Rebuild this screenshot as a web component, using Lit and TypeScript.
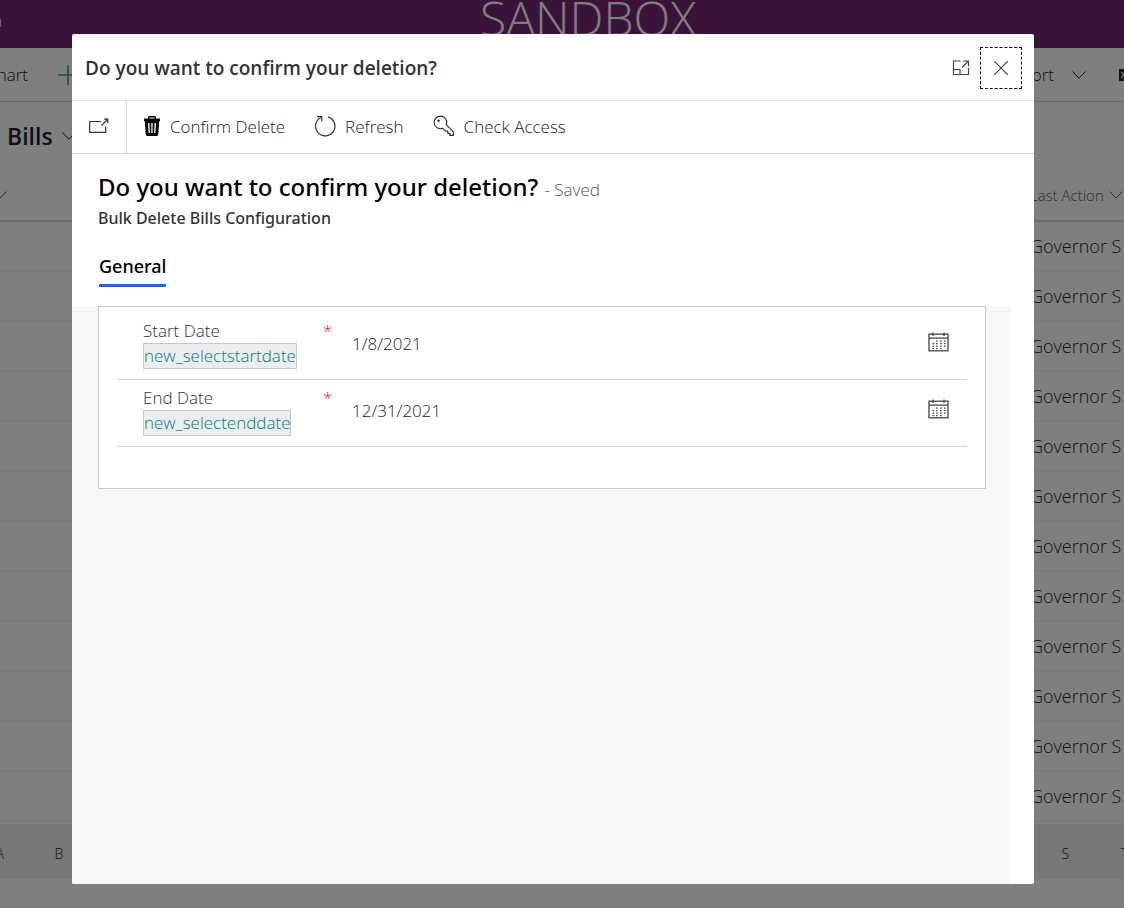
import { LitElement, html, css, svg } from "lit";
import { customElement, property } from "lit/decorators.js";

const chevron = html`<svg class="chevron" width="16" height="10" viewBox="0 0 16 10" fill="none" stroke="currentColor" stroke-width="1"><path d="M1.5 1.5 8 8.2 14.500 1.5" /></svg>`;

const trash = html`<svg width="18" height="20" viewBox="0 0 18 20">
  <path d="M5.500 3V2.200Q5.500.8 7 .8h4q1.500 0 1.500 1.400V3" fill="none" stroke="#000" stroke-width="1.500" />
  <path d="M1 2.600h16v2.600H1z" fill="#000" />
  <path fill-rule="evenodd" d="M1.800 5h14.400l-.9 13.300Q15.200 20 13.500 20h-9Q2.800 20 2.700 18.300zM5 7l.6 10h1.300L6.400 7zM8.300 7v10h1.300V7zM11.600 7l-.5 10h1.300L13 7z" fill="#000" />
</svg>`;

const refresh = html`<svg width="22" height="22" viewBox="0 0 22 22" fill="none" stroke="#333" stroke-width="1.200">
  <path d="M14 1.800A9.700 9.700 0 1 1 7.400 2.200" />
  <path d="M3 1.600h4.700v4.600" />
</svg>`;

const key = html`<svg width="22" height="22" viewBox="0 0 22 22" fill="none" stroke="#333" stroke-width="1.200" stroke-linejoin="round">
  <path d="M13.300 9.700 20.400 16.800V20.400H16.800V18.300H14.700V16.200H12.600L9.700 13.300A6.300 6.300 0 1 1 13.300 9.700z" />
  <circle cx="5.600" cy="5.800" r="1.200" fill="#333" stroke="none" />
</svg>`;

const popOut = html`<svg width="20" height="16" viewBox="0 0 20 16" fill="none" stroke="#333" stroke-width="1.200">
  <path d="M12 3.500H.7v10.800h16V8.500" />
  <path d="M12.500 7.500 18.600 1.400M15 1.200h3.800V5" />
</svg>`;

const expand = html`<svg width="18" height="16" viewBox="0 0 18 16" fill="none" stroke="#444" stroke-width="1.200">
  <path d="M8.500 1H1.500v13.500h15V8" />
  <path d="M1.500 9.500h6.500v5" />
  <path d="M10 7.500 16.300 1.200M11 1h5.500v5.500" />
</svg>`;

const close = html`<svg width="16" height="16" viewBox="0 0 16 16" fill="none" stroke="#444" stroke-width="1.200"><path d="M1.200 1.200 14.800 14.800M14.800 1.200 1.200 14.800" /></svg>`;

const dots = [
  [8, 8.500], [12, 8.500], [16, 8.500],
  [4.500, 11], [8, 11], [12, 11], [16, 11],
  [4.500, 13.500], [8, 13.500], [12, 13.500], [16, 13.500],
  [4.500, 16], [8, 16], [12, 16],
];

const calendar = html`<svg width="21" height="20" viewBox="0 0 21 20" fill="none" stroke="#444" stroke-width="1.300">
  <rect x="1" y="2.200" width="19" height="16.600" />
  <path d="M1 6.200h19M5 .5v3.500M16 .5v3.500" />
  ${dots.map(([x, y]) => svg`<rect x=${x} y=${y} width="1.600" height="1.200" fill="#444" stroke="none" />`)}
</svg>`;

const plus = html`<svg width="18" height="20" viewBox="0 0 18 20" stroke="#3f9c5c" stroke-width="1.600"><path d="M0 10h18M10 0v20" /></svg>`;

const excel = html`<svg width="16" height="12" viewBox="0 0 16 12"><rect width="16" height="12" fill="#222" /><path d="M2.500 3l4 6M6.500 3l-4 6" stroke="#fff" stroke-width="1.300" /></svg>`;

@customElement("date-field")
export class DateField extends LitElement {
  @property() label = "";
  @property() name = "";
  @property() value = "";

  static styles = css`
    :host {
      display: grid;
      grid-template-columns: 180px 29px 1fr auto;
      padding: 0 18px 0 26px;
      height: 66px;
      border-bottom: 1px solid #d6d6d6;
    }
    .caption {
      padding-top: 6px;
      font-size: 17px;
      line-height: 24px;
      color: #333;
    }
    .caption label {
      display: block;
    }
    .schema {
      display: inline-block;
      border: 1px solid #c8c8c8;
      background: #ecedf1;
      color: #007d75;
      line-height: 24px;
    }
    .required {
      padding-top: 6px;
      color: #e81123;
      font-size: 17px;
      line-height: 24px;
    }
    input {
      min-width: 0;
      padding: 0 0 6px;
      margin: 0;
      height: 66px;
      box-sizing: border-box;
      border: 0;
      background: none;
      color: #222;
      font: inherit;
      font-size: 17px;
      outline: 0;
    }
    button {
      display: flex;
      align-items: center;
      padding: 0 0 9px;
      border: 0;
      background: none;
    }
  `;

  render() {
    return html`
      <div class="caption">
        <label for="date">${this.label}</label>
        <span class="schema">${this.name}</span>
      </div>
      <span class="required">*</span>
      <input id="date" type="text" .value=${this.value} />
      <button type="button" aria-label="Pick date">${calendar}</button>
    `;
  }
}

@customElement("app-root")
export class AppRoot extends LitElement {
  static styles = css`
    :host {
      display: block;
      position: relative;
      min-height: 100vh;
      overflow: hidden;
      font-family: "Open Sans", "Noto Sans", sans-serif;
      font-weight: 350;
      color: #222;
      background: #fff;
    }
    button {
      font: inherit;
      color: inherit;
      border: 0;
      padding: 0;
      background: none;
      display: flex;
      align-items: center;
    }
    .chevron {
      flex-shrink: 0;
    }
    .page {
      display: flex;
      flex-direction: column;
      min-height: 100vh;
    }
    .brand {
      display: flex;
      align-items: center;
      height: 48px;
      background: #742774;
      color: #fff;
    }
    .crumb {
      width: 2px;
      display: flex;
      justify-content: flex-end;
      overflow: hidden;
      font-size: 17px;
      line-height: 42px;
      font-weight: 600;
      height: 48px;
    }
    .env {
      flex: 1;
      padding-left: 50px;
      text-align: center;
      font-size: 48px;
      font-weight: 300;
      line-height: 36px;
      height: 48px;
    }
    .commands {
      display: flex;
      align-items: center;
      height: 53px;
      border-bottom: 1px solid #d0d0d0;
      font-size: 17px;
      color: #222;
    }
    .clipped {
      width: 28px;
      margin-right: 30px;
      justify-content: flex-end;
      overflow: hidden;
    }
    .push {
      margin-left: auto;
      gap: 17px;
    }
    .commands .xl {
      width: 5px;
      margin-left: 32px;
      overflow: hidden;
    }
    .xl svg {
      flex-shrink: 0;
    }
    .view {
      display: flex;
      align-items: center;
      gap: 8px;
      height: 68px;
      margin: 0;
      padding-left: 7px;
      font-size: 23px;
      font-weight: 600;
      color: #222;
    }
    .columns {
      display: flex;
      justify-content: space-between;
      align-items: center;
      height: 50px;
      border-bottom: 2px solid #d4d4d4;
      font-size: 15px;
      color: #555;
    }
    .columns .first {
      width: 8px;
      overflow: hidden;
      justify-content: flex-end;
    }
    .columns .last {
      gap: 4px;
      width: 94px;
      white-space: nowrap;
      overflow: hidden;
    }
    .rows {
      margin: 0;
      padding: 0;
      list-style: none;
      font-size: 18px;
      color: #222;
    }
    .rows li {
      display: flex;
      justify-content: flex-end;
      height: 48px;
      line-height: 48px;
      border-bottom: 2px solid #f4f4f4;
    }
    .rows span {
      width: 94px;
      white-space: nowrap;
      overflow: hidden;
    }
    .alphabet {
      display: flex;
      margin: 2px -30px 0;
      background: #eee;
      height: 55px;
      align-items: center;
      font-size: 14px;
      color: #222;
    }
    .alphabet a {
      flex: 1;
      text-align: center;
      color: inherit;
      text-decoration: none;
      padding-top: 4px;
    }
    .overlay {
      position: absolute;
      inset: 0;
      display: grid;
      padding: 34px 90px 24px 72px;
      background: rgba(0, 0, 0, 0.5);
    }
    .dialog {
      display: flex;
      flex-direction: column;
      background: #fff;
      border-radius: 2px;
      overflow: hidden;
    }
    .dialog-head {
      display: flex;
      align-items: center;
      height: 64px;
      padding: 2px 12px 0 13px;
      border-bottom: 1px solid #e1e1e1;
    }
    .dialog-head h1 {
      flex: 1;
      margin: 0;
      font-size: 19px;
      font-weight: 600;
      color: #333;
    }
    .close {
      width: 42px;
      height: 42px;
      margin-left: 10px;
      justify-content: center;
      border: 1px dashed #000;
    }
    .toolbar {
      display: flex;
      height: 52px;
      border-bottom: 1px solid #d6d6d6;
      font-size: 17px;
    }
    .toolbar button {
      gap: 9px;
      margin-right: 29px;
      padding-bottom: 2px;
    }
    .toolbar .pop {
      width: 55px;
      box-sizing: border-box;
      justify-content: center;
      margin-right: 16px;
      border-right: 1px solid #d6d6d6;
    }
    .record {
      padding: 17px 26px 0;
      height: 135px;
    }
    .record h2 {
      margin: 0;
      font-family: "Noto Sans", "Open Sans", sans-serif;
      font-size: 24px;
      line-height: 32px;
      font-weight: 500;
      color: #000;
    }
    .record small {
      font-family: "Open Sans", "Noto Sans", sans-serif;
      font-size: 17px;
      font-weight: 350;
      color: #555;
    }
    .record p {
      margin: 0;
      font-family: "Noto Sans", "Open Sans", sans-serif;
      font-size: 16px;
      line-height: 24px;
      font-weight: 500;
      color: #333;
    }
    .tab {
      margin: 22px 0 0 1px;
      font-family: "Noto Sans", "Open Sans", sans-serif;
      font-size: 18px;
      line-height: 28px;
      font-weight: 500;
      color: #000;
      padding-bottom: 4px;
      border-bottom: 3px solid #2266e3;
    }
    .body {
      flex: 1;
      margin-right: 23px;
      padding: 0 25px 0 26px;
      background: #f8f7f6;
    }
    .card {
      padding: 6px 18px 41px;
      background: #fff;
      border: 1px solid #c8c8c8;
    }
  `;

  render() {
    return html`
      <div class="page">
        <header class="brand">
          <span class="crumb">Admin</span>
          <span class="env">SANDBOX</span>
        </header>
        <nav class="commands">
          <button class="clipped">Chart</button>
          <button aria-label="New">${plus}</button>
          <button class="push">Export ${chevron}</button>
          <button class="xl" aria-label="Excel">${excel}</button>
        </nav>
        <h3 class="view">Bills ${chevron}</h3>
        <div class="columns">
          <button class="first" aria-label="Sort">${chevron}</button>
          <button class="last">Last Action ${chevron}</button>
        </div>
        <ul class="rows">
          ${Array.from({ length: 12 }, () => html`<li><span>Governor S</span></li>`)}
        </ul>
        <nav class="alphabet">
          ${[..."ABCDEFGHIJKLMNOPQRST"].map((c) => html`<a href="#">${c}</a>`)}
        </nav>
      </div>
      <div class="overlay">
        <section class="dialog" role="dialog" aria-labelledby="title">
          <header class="dialog-head">
            <h1 id="title">Do you want to confirm your deletion?</h1>
            <button aria-label="Expand">${expand}</button>
            <button class="close" aria-label="Close">${close}</button>
          </header>
          <div class="toolbar">
            <button class="pop" aria-label="Open in new window">${popOut}</button>
            <button>${trash} Confirm Delete</button>
            <button>${refresh} Refresh</button>
            <button>${key} Check Access</button>
          </div>
          <div class="record">
            <h2>Do you want to confirm your deletion? <small>- Saved</small></h2>
            <p>Bulk Delete Bills Configuration</p>
            <button class="tab" role="tab" aria-selected="true">General</button>
          </div>
          <div class="body">
            <div class="card">
              <date-field label="Start Date" name="new_selectstartdate" value="1/8/2021"></date-field>
              <date-field label="End Date" name="new_selectenddate" value="12/31/2021"></date-field>
            </div>
          </div>
        </section>
      </div>
    `;
  }
}
